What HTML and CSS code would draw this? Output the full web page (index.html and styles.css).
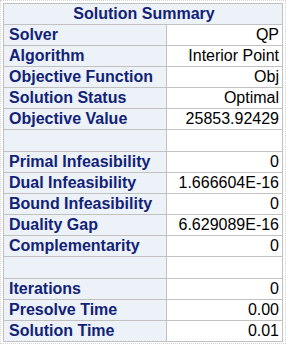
FILE: index.html
```html
<!DOCTYPE html>
<html>
<head>
<meta charset="utf-8">
<link rel="stylesheet" href="styles.css">
</head>
<body>
<div class="frame">
<table class="summary">
<colgroup><col class="c1"><col class="c2"></colgroup>
<thead>
<tr><th class="title" colspan="2">Solution Summary</th></tr>
</thead>
<tbody>
<tr><th>Solver</th><td>QP</td></tr>
<tr><th>Algorithm</th><td>Interior Point</td></tr>
<tr><th>Objective Function</th><td>Obj</td></tr>
<tr><th>Solution Status</th><td>Optimal</td></tr>
<tr><th>Objective Value</th><td>25853.92429</td></tr>
<tr class="blank"><th></th><td></td></tr>
<tr><th>Primal Infeasibility</th><td>0</td></tr>
<tr><th>Dual Infeasibility</th><td>1.666604E-16</td></tr>
<tr><th>Bound Infeasibility</th><td>0</td></tr>
<tr><th>Duality Gap</th><td>6.629089E-16</td></tr>
<tr><th>Complementarity</th><td>0</td></tr>
<tr class="blank"><th></th><td></td></tr>
<tr><th>Iterations</th><td>0</td></tr>
<tr><th>Presolve Time</th><td>0.00</td></tr>
<tr><th>Solution Time</th><td>0.01</td></tr>
</tbody>
</table>
</div>
</body>
</html>
```
FILE: styles.css
```css
html, body {
  margin: 0;
  padding: 0;
  background: #ffffff;
}
.frame {
  display: inline-block;
  border: 1px dotted #d4d4d4;
  padding: 2px 2px 1px 2px;
}
.summary {
  border-collapse: collapse;
  table-layout: fixed;
  width: 279px;
  font-family: "Liberation Sans", Arial, sans-serif;
  font-size: 16px;
  line-height: 18px;
}
.c1 { width: 163px; }
.c2 { width: 116px; }
.summary th, .summary td {
  border: 1px solid #c1c1c1;
  padding: 1px 3px 1px 5px;
  height: 18px;
  white-space: nowrap;
  overflow: hidden;
}
.summary .blank th, .summary .blank td {
  height: 19px;
}
.summary th {
  background: #edf2f9;
  color: #112277;
  font-weight: bold;
  text-align: left;
}
.summary th.title {
  text-align: center;
}
.summary td {
  background: #ffffff;
  color: #000000;
  text-align: right;
}
```
